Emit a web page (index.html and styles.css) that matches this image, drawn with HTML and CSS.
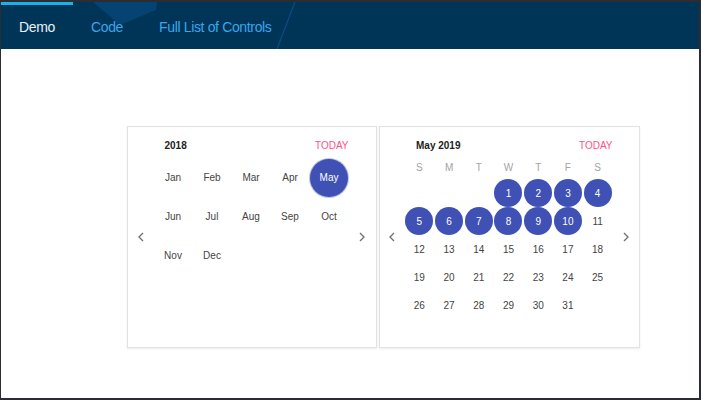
FILE: index.html
```html
<!DOCTYPE html>
<html lang="en">
<head>
<meta charset="utf-8">
<title>Calendar Demo</title>
<link rel="stylesheet" href="styles.css">
</head>
<body>
<div class="frame">
  <header class="topbar">
    <svg class="deco" width="320" height="47" viewBox="0 0 320 47" aria-hidden="true">
      <polygon points="92,0 119,23 155,8 156,0" fill="#054373"/>
      <line x1="294" y1="0" x2="276" y2="47" stroke="#0b4c82" stroke-width="1.2"/>
    </svg>
    <nav class="tabs">
      <a class="tab active">Demo</a>
      <a class="tab">Code</a>
      <a class="tab">Full List of Controls</a>
    </nav>
  </header>
  <main class="content">
    <section class="cal cal-year">
      <div class="nav"><svg width="6" height="10" viewBox="0 0 6 10"><polyline points="5,1 1,5 5,9" fill="none" stroke="#6f6f6f" stroke-width="1.3"/></svg></div>
      <div class="cal-body">
        <div class="cal-head"><span class="title">2018</span><span class="today">TODAY</span></div>
        <div class="months">
          <span class="cell">Jan</span><span class="cell">Feb</span><span class="cell">Mar</span><span class="cell">Apr</span><span class="cell"><span class="sel sel-lg">May</span></span>
          <span class="cell">Jun</span><span class="cell">Jul</span><span class="cell">Aug</span><span class="cell">Sep</span><span class="cell">Oct</span>
          <span class="cell">Nov</span><span class="cell">Dec</span>
        </div>
      </div>
      <div class="nav"><svg width="6" height="10" viewBox="0 0 6 10"><polyline points="1,1 5,5 1,9" fill="none" stroke="#6f6f6f" stroke-width="1.3"/></svg></div>
    </section>
    <section class="cal cal-month">
      <div class="nav"><svg width="6" height="10" viewBox="0 0 6 10"><polyline points="5,1 1,5 5,9" fill="none" stroke="#6f6f6f" stroke-width="1.3"/></svg></div>
      <div class="cal-body">
        <div class="cal-head"><span class="title">May 2019</span><span class="today">TODAY</span></div>
        <div class="weekdays">
          <span>S</span><span>M</span><span>T</span><span>W</span><span>T</span><span>F</span><span>S</span>
        </div>
        <div class="days">
          <span class="cell"></span><span class="cell"></span><span class="cell"></span>
          <span class="cell"><span class="sel">1</span></span><span class="cell"><span class="sel">2</span></span><span class="cell"><span class="sel">3</span></span><span class="cell"><span class="sel">4</span></span>
          <span class="cell"><span class="sel">5</span></span><span class="cell"><span class="sel">6</span></span><span class="cell"><span class="sel">7</span></span><span class="cell"><span class="sel">8</span></span><span class="cell"><span class="sel">9</span></span><span class="cell"><span class="sel">10</span></span><span class="cell">11</span>
          <span class="cell">12</span><span class="cell">13</span><span class="cell">14</span><span class="cell">15</span><span class="cell">16</span><span class="cell">17</span><span class="cell">18</span>
          <span class="cell">19</span><span class="cell">20</span><span class="cell">21</span><span class="cell">22</span><span class="cell">23</span><span class="cell">24</span><span class="cell">25</span>
          <span class="cell">26</span><span class="cell">27</span><span class="cell">28</span><span class="cell">29</span><span class="cell">30</span><span class="cell">31</span>
        </div>
      </div>
      <div class="nav"><svg width="6" height="10" viewBox="0 0 6 10"><polyline points="1,1 5,5 1,9" fill="none" stroke="#6f6f6f" stroke-width="1.3"/></svg></div>
    </section>
  </main>
</div>
</body>
</html>
```
FILE: styles.css
```css
* { box-sizing: border-box; }
html, body { margin: 0; padding: 0; background: #ffffff; }
body { font-family: "Liberation Sans", Arial, sans-serif; }

.frame {
  width: 701px;
  height: 400px;
  border: 2px solid #2b2d33;
  border-left-width: 1px;
  background: #ffffff;
  overflow: hidden;
}

.topbar {
  position: relative;
  height: 47px;
  background: #003558;
}
.deco { position: absolute; left: 0; top: 0; }

.tabs { position: relative; display: flex; height: 47px; }
.tab {
  display: block;
  padding: 14px 18px 0;
  border-top: 3px solid transparent;
  font-size: 14px;
  line-height: 16px;
  letter-spacing: -0.35px;
  color: #3aa6ec;
  text-decoration: none;
}
.tab.active { border-top-color: #18b4e9; color: #e9eff4; }

.content {
  display: flex;
  gap: 2px;
  padding: 77px 0 0 126px;
}

.cal {
  display: flex;
  align-items: flex-start;
  height: 222px;
  border: 1px solid #e2e2e2;
  box-shadow: 0 1px 2px rgba(0, 0, 0, 0.08);
  background: #fff;
}
.cal-year { width: 250px; }
.cal-month { width: 261px; }

.nav {
  align-self: center;
  display: flex;
  justify-content: center;
  align-items: center;
  height: 12px;
}
.cal-year .nav:first-child { width: 25.5px; }
.cal-year .nav:last-child { width: 27.5px; }
.cal-month .nav:first-child { width: 24.5px; }
.cal-month .nav:last-child { width: 26.5px; }

.cal-body { padding-top: 8px; }
.cal-year .cal-body { width: 195px; }
.cal-month .cal-body { width: 208px; }

.cal-head {
  display: flex;
  justify-content: space-between;
  align-items: center;
  height: 20px;
  font-size: 10px;
}
.cal-year .cal-head { padding-left: 11px; }
.cal-month .cal-head { padding-left: 11.5px; }
.title { font-weight: bold; color: #222; }
.today { color: #ff5287; }

.months {
  display: grid;
  grid-template-columns: repeat(5, 39px);
  grid-auto-rows: 39px;
  margin-top: 3px;
  font-size: 10px;
  color: #444;
}
.cell {
  display: flex;
  justify-content: center;
  align-items: center;
}

.weekdays {
  display: grid;
  grid-template-columns: repeat(7, 1fr);
  height: 23px;
  margin-top: 1px;
  align-items: center;
  font-size: 10px;
  color: #a3a3a3;
  text-align: center;
}
.days {
  display: grid;
  grid-template-columns: repeat(7, 1fr);
  grid-auto-rows: 28px;
  font-size: 10px;
  color: #444;
}

.sel {
  display: flex;
  justify-content: center;
  align-items: center;
  flex: none;
  width: 28px;
  height: 28px;
  border-radius: 50%;
  background: #3f51b5;
  color: #fff;
}
.sel-lg {
  width: 38px;
  height: 38px;
  box-shadow: 0 0 0 1px rgba(63, 81, 181, 0.35);
}
```
